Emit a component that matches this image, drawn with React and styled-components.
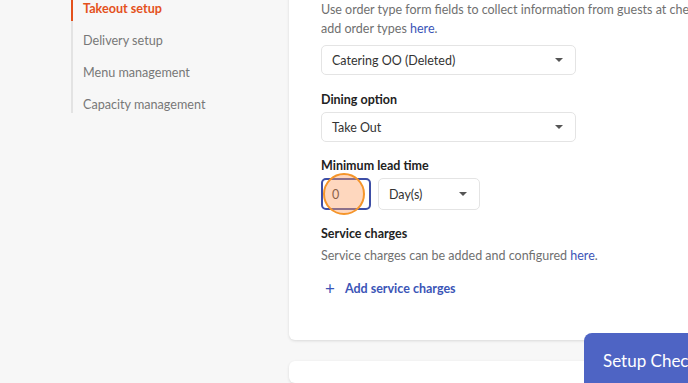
import React from "react";
import styled, { createGlobalStyle } from "styled-components";

const GlobalStyle = createGlobalStyle`
  html, body {
    margin: 0;
    padding: 0;
    height: 383px;
    overflow: hidden;
    background: #f7f7f7;
    font-family: Lato, "Noto Sans", sans-serif;
  }
`;

const Page = styled.div`
  display: flex;
  width: 688px;
  height: 383px;
  overflow: hidden;
  position: relative;
`;

const Sidebar = styled.nav`
  width: 218px;
  flex: none;
  padding-left: 71px;
`;

const NavList = styled.ul`
  list-style: none;
  margin: -3px 0 0;
  padding: 0;
  border-left: 2px solid #e3e3e3;
  display: flex;
  flex-direction: column;
  gap: 8px;
  height: 116px;
`;

const NavItem = styled.li`
  height: 24px;
  line-height: 24px;
  padding-left: 10px;
  margin-left: ${p => (p.$active ? "-2px" : "0")};
  border-left: ${p => (p.$active ? "2px solid #e4511c" : "none")};
  font-size: 12.6px;
  font-weight: ${p => (p.$active ? 700 : 400)};
  color: ${p => (p.$active ? "#e4511c" : "#777")};
  white-space: nowrap;
`;

const Main = styled.main`
  flex: none;
  width: 440px;
  margin-top: -20px;
  display: flex;
  flex-direction: column;
  gap: 21px;
`;

const Card = styled.section`
  background: #fff;
  border-radius: 6px 0 0 6px;
  box-shadow: 0 1px 3px rgba(0, 0, 0, 0.12);
  padding: ${p => (p.$empty ? "0" : "20px 32px 41px")};
  height: ${p => (p.$empty ? "60px" : "auto")};
`;

const Text = styled.p`
  margin: ${p => p.$top ?? 0}px 0 0;
  font-size: 12.5px;
  line-height: 19px;
  color: #707070;
  white-space: nowrap;
`;

const Link = styled.a`
  color: #3b55b7;
  text-decoration: none;
`;

const Label = styled.div`
  margin-top: ${p => p.$top ?? 14}px;
  height: 18px;
  font-size: 12.5px;
  font-weight: 700;
  line-height: 20px;
  color: #222;
`;

const Select = styled.div`
  box-sizing: border-box;
  width: ${p => p.$width ?? 255}px;
  height: ${p => p.$height ?? 30}px;
  margin-top: ${p => p.$top ?? 4}px;
  border: 1px solid #e4e4e4;
  border-radius: 5px;
  display: flex;
  align-items: center;
  justify-content: space-between;
  padding: 0 12px 0 10px;
  font-size: 12.5px;
  color: #333;
  background: #fff;
`;

const Caret = styled.span`
  width: 0;
  height: 0;
  border-left: 4px solid transparent;
  border-right: 4px solid transparent;
  border-top: 4px solid #555;
`;

const Row = styled.div`
  display: flex;
  gap: 7px;
  margin-top: 4px;
`;

const InputWrap = styled.div`
  position: relative;
  width: 50px;
  height: 32px;
`;

const Input = styled.div`
  box-sizing: border-box;
  width: 50px;
  height: 32px;
  border: 2px solid #3d4ea6;
  border-radius: 5px;
  padding-left: 9px;
  display: flex;
  align-items: center;
  font-size: 12.5px;
  color: #333;
`;

const Highlight = styled.span`
  position: absolute;
  left: 2px;
  top: -5px;
  width: 42px;
  height: 42px;
  box-sizing: border-box;
  border-radius: 50%;
  border: 2px solid #f5952a;
  background: rgba(252, 160, 100, 0.42);
  pointer-events: none;
`;

const AddButton = styled.div`
  margin-top: 14px;
  display: flex;
  align-items: center;
  gap: 10px;
  padding-left: 4px;
  font-size: 12.5px;
  line-height: 20px;
  font-weight: 700;
  color: #3b55b7;
`;

const Plus = styled.span`
  font-size: 17px;
  font-weight: 400;
  line-height: 20px;
`;

const SetupButton = styled.button`
  position: absolute;
  left: 584px;
  top: 333px;
  width: 140px;
  height: 60px;
  border: 0;
  border-radius: 8px 0 0 0;
  background: #4e64c4;
  color: #fff;
  font-family: Lato, "Noto Sans", sans-serif;
  font-size: 17px;
  text-align: left;
  padding: 0 0 6px 19px;
  white-space: nowrap;
  overflow: hidden;
`;

export default function App() {
  return (
    <Page>
      <GlobalStyle />
      <Sidebar>
        <NavList>
          <NavItem $active>Takeout setup</NavItem>
          <NavItem>Delivery setup</NavItem>
          <NavItem>Menu management</NavItem>
          <NavItem>Capacity management</NavItem>
        </NavList>
      </Sidebar>

      <Main>
        <Card>
          <Text>
            Use order type form fields to collect information from guests at checkout. You can
            <br />
            add order types <Link>here</Link>.
          </Text>
          <Select $top={7}>
            Catering OO (Deleted)
            <Caret />
          </Select>

          <Label $top={15}>Dining option</Label>
          <Select>
            Take Out
            <Caret />
          </Select>

          <Label>Minimum lead time</Label>
          <Row>
            <InputWrap>
              <Input>0</Input>
              <Highlight />
            </InputWrap>
            <Select $width={102} $height={32} $top={0}>
              Day(s)
              <Caret />
            </Select>
          </Row>

          <Label>Service charges</Label>
          <Text $top={4}>
            Service charges can be added and configured <Link>here</Link>.
          </Text>
          <AddButton>
            <Plus>+</Plus>
            Add service charges
          </AddButton>
        </Card>
        <Card $empty />
      </Main>

      <SetupButton>Setup Checkout</SetupButton>
    </Page>
  );
}
